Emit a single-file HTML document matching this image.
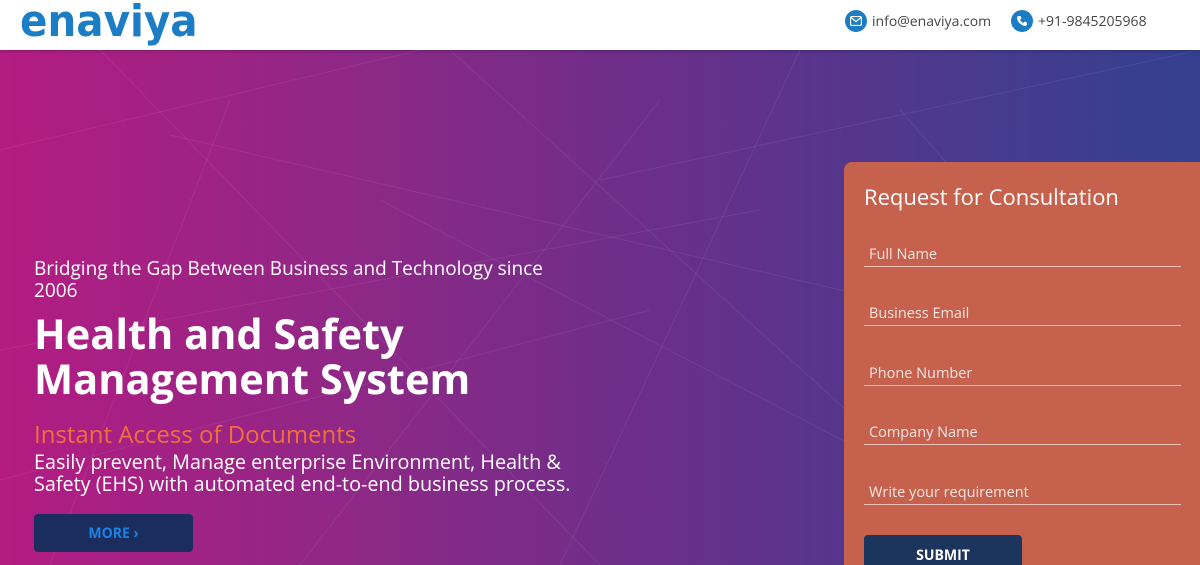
<!DOCTYPE html>
<html><head><meta charset="utf-8"><style>
*{margin:0;padding:0;box-sizing:border-box}
html,body{width:1200px;height:565px;overflow:hidden}
body{font-family:"Open Sans","Liberation Sans",sans-serif;position:relative;background:#fff}
.hdr{position:absolute;left:0;top:0;width:1200px;height:50px;background:#fff;box-shadow:0 1px 3px rgba(0,0,0,.25)}
.logo{position:absolute;left:20px;top:-4px;font-size:44px;font-weight:bold;color:#1c7cc4;letter-spacing:0px;font-family:"DejaVu Sans","Liberation Sans",sans-serif;transform:scaleX(0.92);transform-origin:left}
.ct{position:absolute;top:10px;font-size:14px;color:#444;display:flex;align-items:center}
.ic{width:22px;height:22px;border-radius:50%;background:#1c7cc4;margin-right:5px;display:flex;align-items:center;justify-content:center}
.hero{position:absolute;left:0;top:50px;width:1200px;height:515px;background:linear-gradient(90deg,#b41c82 0%,#8e2886 30%,#6a2f8a 55%,#4a3a8e 80%,#33408e 100%);overflow:hidden}
.t{position:absolute;color:#fff;left:34px}
.form{position:absolute;left:844px;top:162px;width:370px;height:403px;background:#c5614c;border-radius:8px 8px 0 0;overflow:hidden}
.form h3{position:absolute;left:20px;top:20px;color:#fff;font-weight:normal;font-size:22px}
.f{position:absolute;left:20px;width:317px;border-bottom:1px solid rgba(255,255,255,.6);color:#f4e6e2;font-size:14.5px;padding-left:5px;height:22px}
.btn{position:absolute;border-radius:4px;display:flex;align-items:center;justify-content:center;font-weight:bold}
</style></head><body>
<div class="hero">
<svg width="1200" height="515" style="position:absolute;left:0;top:0" stroke="rgba(255,255,255,0.07)" stroke-width="1">
<line x1="0" y1="100" x2="420" y2="0"/><line x1="100" y1="0" x2="600" y2="515"/><line x1="230" y1="50" x2="50" y2="515"/><line x1="660" y1="50" x2="300" y2="515"/><line x1="380" y1="150" x2="900" y2="420"/><line x1="600" y1="130" x2="1200" y2="0"/><line x1="0" y1="300" x2="760" y2="160"/><line x1="450" y1="0" x2="1000" y2="500"/><line x1="800" y1="0" x2="560" y2="515"/><line x1="170" y1="85" x2="1100" y2="300"/><line x1="0" y1="430" x2="650" y2="260"/><line x1="900" y1="60" x2="1200" y2="400"/>
</svg>
<div class="t" style="top:207px;font-size:19px;line-height:22px;width:545px">Bridging the Gap Between Business and Technology since 2006</div>
<div class="t" style="top:262px;font-size:41.5px;font-weight:bold;line-height:45px">Health and Safety<br>Management System</div>
<div class="t" style="top:368px;font-size:24px;color:#f0703a">Instant Access of Documents</div>
<div class="t" style="top:401px;font-size:19.8px;line-height:22px;width:550px">Easily prevent, Manage enterprise Environment, Health &amp; Safety (EHS) with automated end-to-end business process.</div>
<div class="btn" style="left:34px;top:464px;width:159px;height:38px;background:#1b2d5c;color:#1a82e6;font-size:14px">MORE ›</div>
</div>
<div class="hdr">
<div class="logo">enaviya</div>
<div class="ct" style="left:845px"><div class="ic"><svg width="12" height="10" viewBox="0 0 12 10"><rect x="0.5" y="0.5" width="11" height="9" rx="1.5" fill="none" stroke="#fff" stroke-width="1.3"/><path d="M1 1.5 L6 5.5 L11 1.5" fill="none" stroke="#fff" stroke-width="1.3"/></svg></div>info@enaviya.com</div>
<div class="ct" style="left:1011px"><div class="ic"><svg width="12" height="12" viewBox="0 0 12 12"><path d="M2 1 L4.5 1 L5.5 3.5 L4 4.8 Q5 7 7.2 8 L8.5 6.5 L11 7.5 L11 10 Q10 11 8.5 11 Q2 9 1 3.5 Q1 2 2 1Z" fill="#fff"/></svg></div>+91-9845205968</div>
</div>
<div class="form">
<h3>Request for Consultation</h3>
<div class="f" style="top:83px">Full Name</div>
<div class="f" style="top:142px">Business Email</div>
<div class="f" style="top:202px">Phone Number</div>
<div class="f" style="top:261px">Company Name</div>
<div class="f" style="top:321px">Write your requirement</div>
<div class="btn" style="left:20px;top:373px;width:158px;height:40px;background:#1c355c;color:#fff;font-size:14px">SUBMIT</div>
</div>
</body></html>
